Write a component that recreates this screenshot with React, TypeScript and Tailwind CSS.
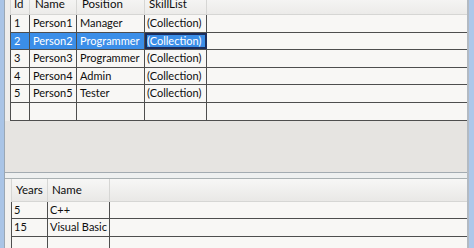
import React from "react";

const rows = [
  { id: "1", name: "Person1", pos: "Manager", skill: "(Collection)", h: "h-[18px]" },
  { id: "2", name: "Person2", pos: "Programmer", skill: "(Collection)", h: "h-[17px]", sel: true },
  { id: "3", name: "Person3", pos: "Programmer", skill: "(Collection)", h: "h-[18px]" },
  { id: "4", name: "Person4", pos: "Admin", skill: "(Collection)", h: "h-[17px]" },
  { id: "5", name: "Person5", pos: "Tester", skill: "(Collection)", h: "h-[18px]" },
  { id: "", name: "", pos: "", skill: "", h: "h-[18px]" },
];

const skills = [
  { y: "5", n: "C++", h: "h-[17px]" },
  { y: "15", n: "Visual Basic", h: "h-[18px]" },
];

export default function App() {
  return (
    <div className="flex h-[248px] w-[474px] overflow-hidden whitespace-nowrap bg-[#eeedeb] font-['Lato','Open_Sans',sans-serif] text-[11px] text-[#0e0e0e]">
      <div className="w-[4px] bg-[#a9c4e6]" />
      <div className="w-px bg-[#9aa7b4]" />
      <div className="flex min-w-0 flex-1 flex-col">
        {/* top grid */}
        <div className="flex flex-col pl-[5px]">
          <div className="mt-[-6px] flex h-[21px] border-b border-l border-[#d6d6d4] bg-gradient-to-b from-[#f8f8f7] to-[#ecebe9] text-[11.5px]">
            <div className="flex w-[19px] items-center border-r border-[#d6d6d4] pl-[3px]">Id</div>
            <div className="flex w-[47px] items-center border-r border-[#d6d6d4] pl-[5px]">Name</div>
            <div className="flex w-[68px] items-center border-r border-[#d6d6d4] pl-[5px]">Position</div>
            <div className="flex w-[62px] items-center border-r border-[#d6d6d4] pl-[4px]">SkillList</div>
            <div className="flex-1" />
          </div>
          {rows.map((r, i) => (
            <div key={i} className={`flex ${r.h} border-b border-l border-[#4e4e4e] bg-[#f8f7f5]`}>
              <div className={`flex w-[19px] items-center overflow-hidden border-r border-[#4e4e4e] pl-[3px] ${r.sel ? "bg-[#3b8ee8] text-white" : ""}`}>{r.id}</div>
              <div className={`flex w-[47px] items-center overflow-hidden border-r border-[#4e4e4e] pl-[3px] ${r.sel ? "bg-[#3b8ee8] text-white" : ""}`}>{r.name}</div>
              <div className={`flex w-[68px] items-center overflow-hidden border-r border-[#4e4e4e] pl-[3px] ${r.sel ? "bg-[#3b8ee8] text-white" : ""}`}>{r.pos}</div>
              <div className={`flex w-[62px] items-center overflow-hidden border-r border-[#4e4e4e] ${r.sel ? "bg-[#3b8ee8] pl-[2px] text-white outline outline-2 -outline-offset-2 outline-[#1b2d5c]" : "pl-[2px]"}`}>
                {r.skill}
              </div>
              <div className="flex-1" />
            </div>
          ))}
        </div>
        <div className="h-[51px] bg-[#e6e4e1]" />
        {/* splitter */}
        <div className="h-px bg-[#a3abb1]" />
        <div className="h-[5px] bg-[#eef0f0]" />
        <div className="h-px bg-[#a9b0b2]" />
        {/* bottom grid */}
        <div className="flex flex-1 flex-col bg-[#f2f1ef] pl-[6px]">
          <div className="flex h-[23px] border-b border-l border-[#d6d6d4] bg-gradient-to-b from-[#f7f7f6] to-[#e9e8e6] text-[11.5px]">
            <div className="flex w-[36px] items-center border-r border-[#d6d6d4] pl-[4px]">Years</div>
            <div className="flex w-[62px] items-center border-r border-[#d6d6d4] pl-[4px]">Name</div>
            <div className="flex-1" />
          </div>
          {skills.map((s, i) => (
            <div key={i} className={`flex ${s.h} border-b border-l border-[#4e4e4e] bg-[#f8f7f5]`}>
              <div className="flex w-[36px] items-center overflow-hidden border-r border-[#4e4e4e] pl-[2px]">{s.y}</div>
              <div className="flex w-[62px] items-center overflow-hidden border-r border-[#4e4e4e] pl-[2px]">{s.n}</div>
              <div className="flex-1" />
            </div>
          ))}
          <div className="flex flex-1 border-l border-[#4e4e4e] bg-[#f8f7f5]">
            <div className="w-[36px] border-r border-[#4e4e4e]" />
            <div className="w-[62px] border-r border-[#4e4e4e]" />
            <div className="flex-1" />
          </div>
        </div>
      </div>
      <div className="w-[2px] bg-[#b3bac2]" />
      <div className="w-[5px] bg-[#aec8ea]" />
    </div>
  );
}
